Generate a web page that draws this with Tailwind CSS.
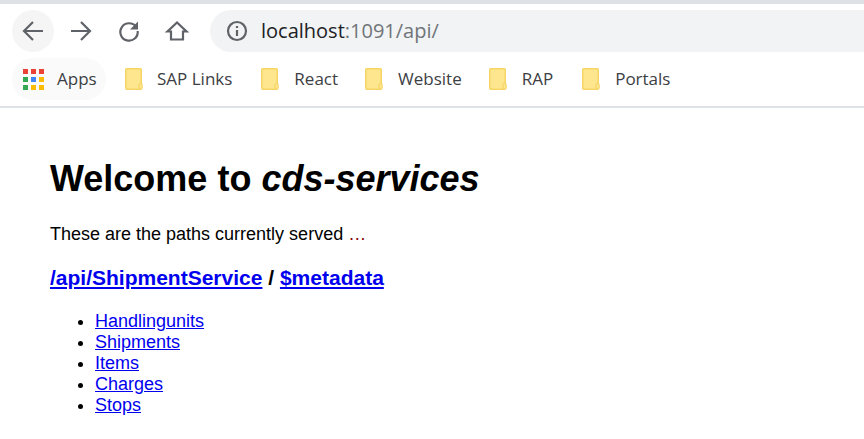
<!DOCTYPE html>
<html>
<head>
<meta charset="utf-8">
<script src="https://cdn.jsdelivr.net/npm/@tailwindcss/browser@4"></script>
</head>
<body class="bg-white overflow-hidden h-[439px] font-['Liberation_Sans',sans-serif]">
<div class="h-1 bg-[#dee1e6]"></div>
<div class="h-[54px] flex items-center pl-3 bg-white">
  <div class="w-[42px] h-[42px] rounded-full bg-[#f5f5f5] flex items-center justify-center">
    <svg width="24" height="24" viewBox="0 0 24 24" fill="none" stroke="#5f6368" stroke-width="2.2"><path d="M22 12H3M12 3l-9 9 9 9"/></svg>
  </div>
  <div class="w-[48px] h-[42px] ml-[3px] flex items-center justify-center">
    <svg width="24" height="24" viewBox="0 0 24 24" fill="none" stroke="#5f6368" stroke-width="2.2"><path d="M2 12h19M12 3l9 9-9 9"/></svg>
  </div>
  <div class="w-[48px] h-[42px] flex items-center justify-center">
    <svg width="24" height="24" viewBox="0 0 24 24" fill="none" stroke="#5f6368" stroke-width="2.2"><path d="M19.2 8A8.7 8.7 0 1 0 20.7 12"/><path d="M21 2.5v8h-8z" fill="#5f6368" stroke="none"/></svg>
  </div>
  <div class="w-[48px] h-[42px] flex items-center justify-center">
    <svg width="24" height="24" viewBox="0 0 24 24" fill="none" stroke="#5f6368" stroke-width="2.2"><path d="M12 3.5 2.5 12.5H6V20.5H18V12.5H21.5Z" stroke-linejoin="miter"/></svg>
  </div>
  <div class="ml-[9px] flex-1 h-[42px] rounded-l-full bg-[#f1f3f4] flex items-center pl-[15px]">
    <svg width="24" height="24" viewBox="0 0 24 24" fill="none" stroke="#5f6368" stroke-width="2.2"><circle cx="12" cy="12" r="9"/><path d="M12 11v6M12 7v2"/></svg>
    <span class="ml-[12px] font-['Open_Sans',sans-serif] text-[20px] text-[#202124]">localhost<span class="text-[#70757a]">:1091/api/</span></span>
  </div>
</div>
<div class="h-[50px] flex items-start pl-3 border-b-2 border-[#dee1e6] font-['Open_Sans',sans-serif] text-[17px] text-[#3c4043]">
  <div class="w-[94px] h-[42px] rounded-full bg-[#fafafa] flex items-center pl-[11px] gap-[13px]">
    <svg width="21" height="21" viewBox="0 0 21 21">
      <rect x="0" y="0" width="5" height="5" fill="#ea4335"/><rect x="8" y="0" width="5" height="5" fill="#ea4335"/><rect x="16" y="0" width="5" height="5" fill="#ea4335"/>
      <rect x="0" y="8" width="5" height="5" fill="#34a853"/><rect x="8" y="8" width="5" height="5" fill="#4285f4"/><rect x="16" y="8" width="5" height="5" fill="#fbbc05"/>
      <rect x="0" y="16" width="5" height="5" fill="#34a853"/><rect x="8" y="16" width="5" height="5" fill="#fbbc05"/><rect x="16" y="16" width="5" height="5" fill="#fbbc05"/>
    </svg>
    <span>Apps</span>
  </div>
  <div class="ml-[19px] h-[42px] flex items-center gap-[14px]"><svg width="18" height="23" viewBox="0 0 18 23"><rect x="0.75" y="0.75" width="15.5" height="20.5" rx="1" fill="#fee68f" stroke="#f6d564" stroke-width="1.5"/><rect x="14" y="15.5" width="3.2" height="5.7" rx="1" fill="#fee68f" stroke="#f4cf5b" stroke-width="1"/></svg><span>SAP Links</span></div>
  <div class="ml-[29px] h-[42px] flex items-center gap-[15px]"><svg width="18" height="23" viewBox="0 0 18 23"><rect x="0.75" y="0.75" width="15.5" height="20.5" rx="1" fill="#fee68f" stroke="#f6d564" stroke-width="1.5"/><rect x="14" y="15.5" width="3.2" height="5.7" rx="1" fill="#fee68f" stroke="#f4cf5b" stroke-width="1"/></svg><span>React</span></div>
  <div class="ml-[27px] h-[42px] flex items-center gap-[15px]"><svg width="18" height="23" viewBox="0 0 18 23"><rect x="0.75" y="0.75" width="15.5" height="20.5" rx="1" fill="#fee68f" stroke="#f6d564" stroke-width="1.5"/><rect x="14" y="15.5" width="3.2" height="5.7" rx="1" fill="#fee68f" stroke="#f4cf5b" stroke-width="1"/></svg><span>Website</span></div>
  <div class="ml-[27px] h-[42px] flex items-center gap-[15px]"><svg width="18" height="23" viewBox="0 0 18 23"><rect x="0.75" y="0.75" width="15.5" height="20.5" rx="1" fill="#fee68f" stroke="#f6d564" stroke-width="1.5"/><rect x="14" y="15.5" width="3.2" height="5.7" rx="1" fill="#fee68f" stroke="#f4cf5b" stroke-width="1"/></svg><span>RAP</span></div>
  <div class="ml-[29px] h-[42px] flex items-center gap-[15px]"><svg width="18" height="23" viewBox="0 0 18 23"><rect x="0.75" y="0.75" width="15.5" height="20.5" rx="1" fill="#fee68f" stroke="#f6d564" stroke-width="1.5"/><rect x="14" y="15.5" width="3.2" height="5.7" rx="1" fill="#fee68f" stroke="#f4cf5b" stroke-width="1"/></svg><span>Portals</span></div>
</div>
<main class="pl-[50px] pt-[49px] text-black">
  <h1 class="text-[36px] leading-[44px] font-bold">Welcome to <em>cds-services</em></h1>
  <p class="mt-[23px] text-[18px] leading-[21px]">These are the paths currently served <span class="text-[#8b0000]">…</span></p>
  <h2 class="mt-[21px] text-[21px] leading-[24px] font-bold"><a href="#" class="text-[#0000ee] underline">/api/ShipmentService</a> / <a href="#" class="text-[#0000ee] underline">$metadata</a></h2>
  <ul class="mt-[21px] pl-[45px] list-disc text-[18px] leading-[21px]">
    <li><a href="#" class="text-[#0000ee] underline">Handlingunits</a></li>
    <li><a href="#" class="text-[#0000ee] underline">Shipments</a></li>
    <li><a href="#" class="text-[#0000ee] underline">Items</a></li>
    <li><a href="#" class="text-[#0000ee] underline">Charges</a></li>
    <li><a href="#" class="text-[#0000ee] underline">Stops</a></li>
  </ul>
</main>
</body>
</html>
